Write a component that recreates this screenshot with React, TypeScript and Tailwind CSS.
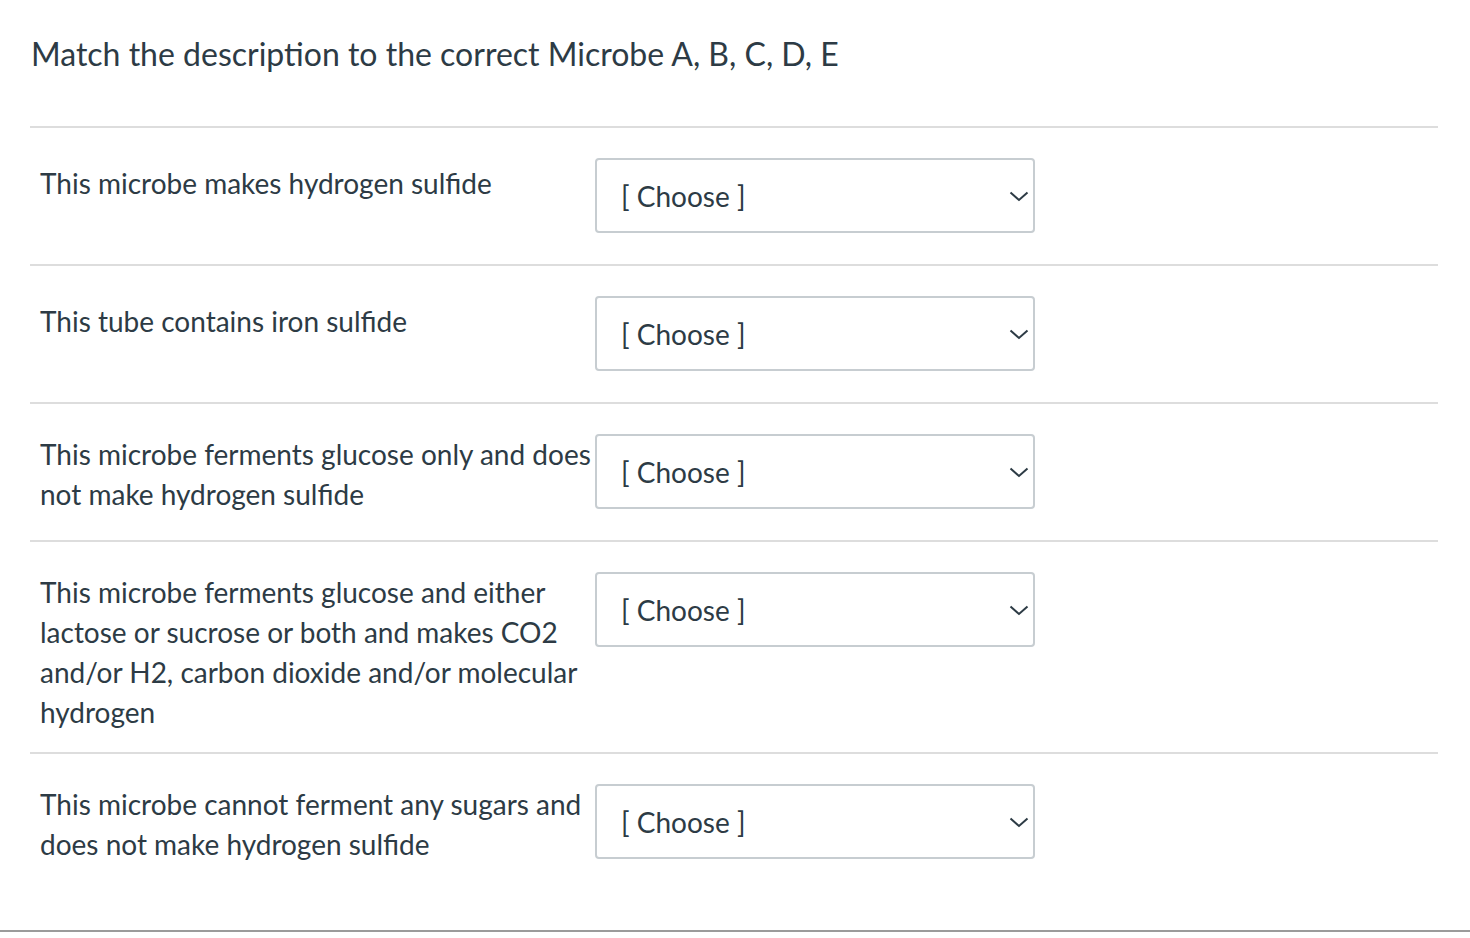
import React from "react";

const rows = [
  { text: "This microbe makes hydrogen sulfide", single: true },
  { text: "This tube contains iron sulfide", single: true },
  { text: "This microbe ferments glucose only and does not make hydrogen sulfide", single: false },
  {
    text: "This microbe ferments glucose and either lactose or sucrose or both and makes CO2 and/or H2, carbon dioxide and/or molecular hydrogen",
    single: false,
  },
  { text: "This microbe cannot ferment any sugars and does not make hydrogen sulfide", single: false },
];

const ChoiceSelect = () => (
  <div className="mb-[11px] flex h-[75px] w-[440px] shrink-0 items-center justify-between rounded-[4px] border-2 border-[#c7cdd1] bg-white pl-[24px] pr-[4px]">
    <span className="text-[28px] leading-[40px] text-[#2d3b45]">[ Choose ]</span>
    <svg width="20" height="20" viewBox="0 0 20 20" fill="none">
      <path d="M1.5 6.5l8.5 7.5 8.5-7.5" stroke="#2d3b45" strokeWidth="2" />
    </svg>
  </div>
);

export default function App() {
  return (
    <div className="min-h-screen w-full bg-white font-['Lato',sans-serif] text-[#2d3b45]">
      <div className="pl-[31px] pt-[34px] text-[32px] leading-[40px]">
        Match the description to the correct Microbe A, B, C, D, E
      </div>

      <div className="ml-[30px] mr-[32px] mt-[52px] border-t-2 border-[#dddddd]">
        {rows.map((row, idx) => (
          <div
            key={idx}
            className={
              idx < rows.length - 1
                ? "flex items-start border-b-2 border-[#dddddd] pb-[20px] pl-[10px] pt-[30px]"
                : "flex items-start pb-[20px] pl-[10px] pt-[30px]"
            }
          >
            <div
              className={
                row.single
                  ? "w-[555px] shrink-0 pt-[5px] text-[28px] leading-[40px]"
                  : "w-[555px] shrink-0 text-[28px] leading-[40px]"
              }
            >
              {row.text}
            </div>
            <ChoiceSelect />
          </div>
        ))}
      </div>

      <div className="mt-[40px] border-t-2 border-[#9b9b9b]" />
    </div>
  );
}
